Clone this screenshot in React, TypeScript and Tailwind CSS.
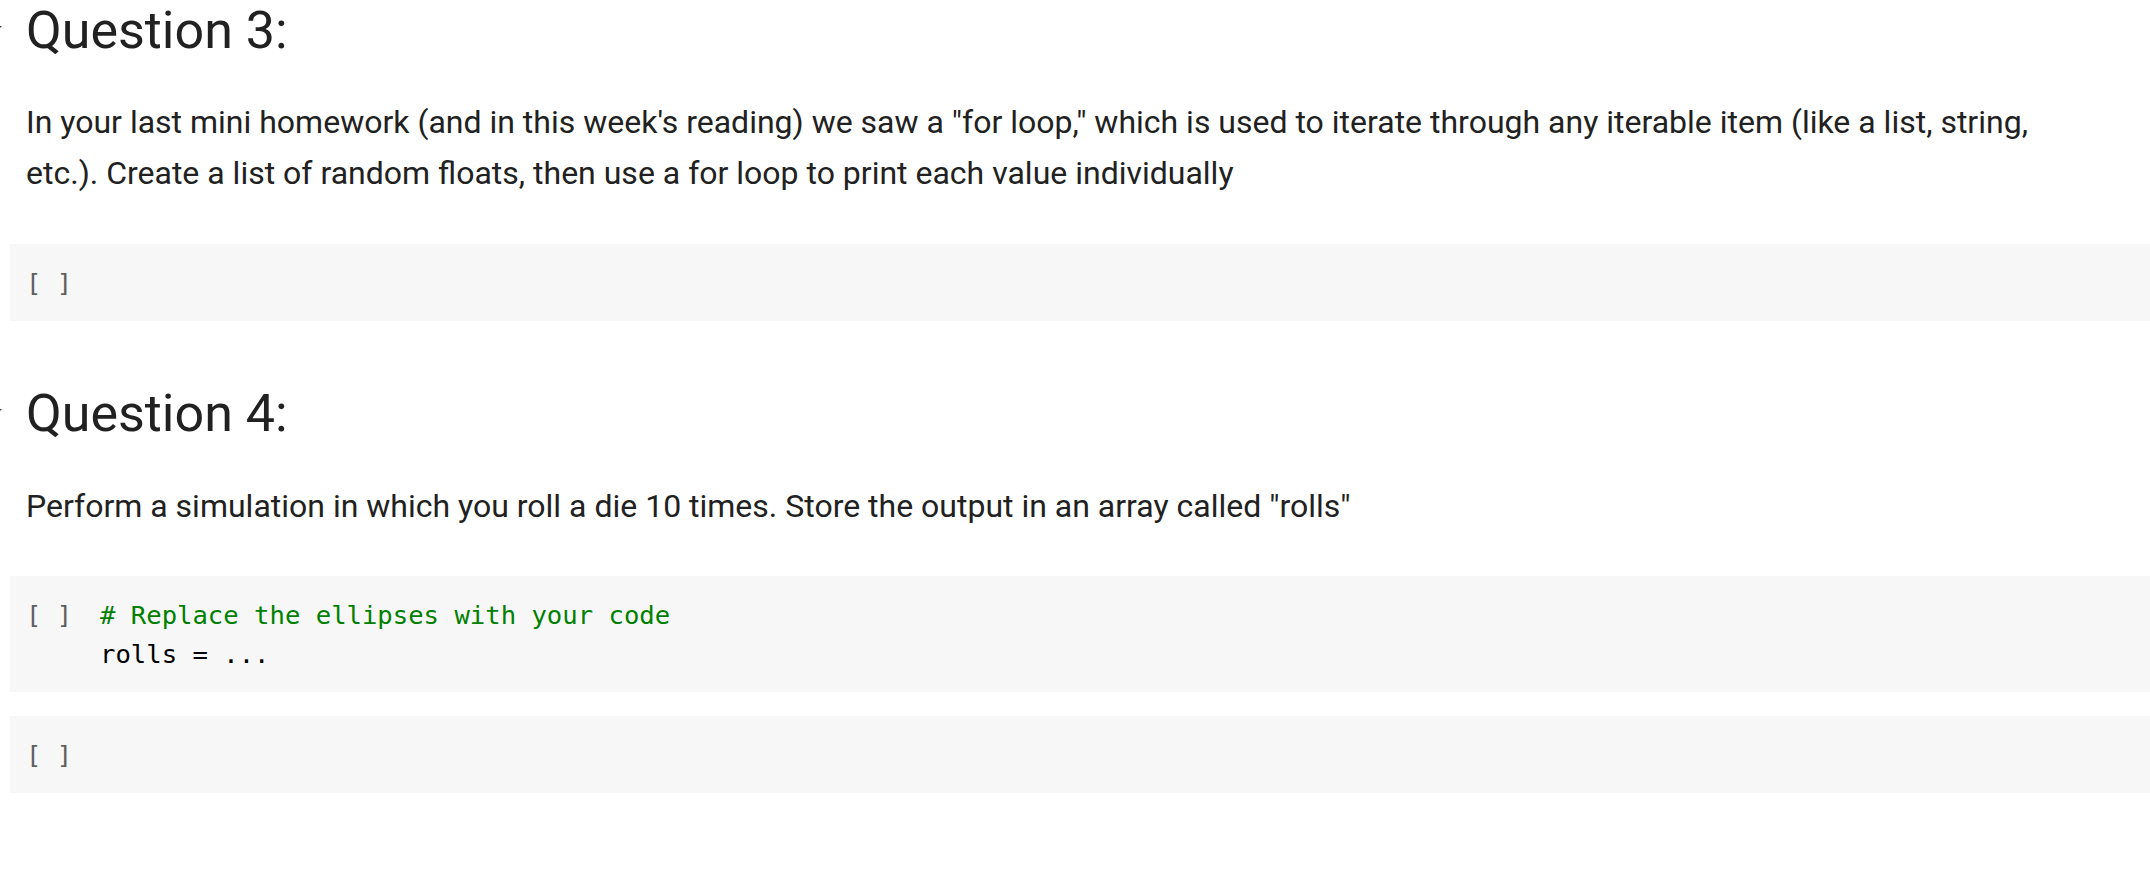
import React from "react";

function Triangle() {
  return (
    <div className="absolute left-[-8px] top-[25px] w-0 h-0 border-l-[5px] border-r-[5px] border-t-[5px] border-l-transparent border-r-transparent border-t-[#444]" />
  );
}

function Heading({ children }: { children: React.ReactNode }) {
  return (
    <div className="relative">
      <Triangle />
      <h2 className="pl-[26px] text-[52px] leading-[60px] font-normal text-[#212121]">{children}</h2>
    </div>
  );
}

function Para({ children }: { children: React.ReactNode }) {
  return (
    <p className="pl-[26px] pr-[80px] text-[32px] leading-[51px] text-[#212121]">{children}</p>
  );
}

function Cell({ lines }: { lines?: React.ReactNode[] }) {
  return (
    <div className="ml-[10px] bg-[#f7f7f7] pt-[20px] pb-[18px] flex font-['DejaVu_Sans_Mono',monospace] text-[25.6px] leading-[39px]">
      <div className="w-[90px] shrink-0 pl-[16px] text-[#5f5f5f] whitespace-pre">[ ]</div>
      <div className="whitespace-pre">
        {lines && lines.length ? lines.map((l, i) => <div key={i}>{l}</div>) : <div>&nbsp;</div>}
      </div>
    </div>
  );
}

export default function App() {
  return (
    <div className="w-[2150px] h-[871px] overflow-hidden bg-white font-['Roboto',sans-serif]">
      <div className="pt-[1px]">
        <Heading>Question 3:</Heading>
        <div className="mt-[36px]">
          <Para>
            In your last mini homework (and in this week's reading) we saw a "for loop," which is used to iterate through any iterable item (like a list, string, etc.). Create a list of random floats, then use a for loop to print each value individually
          </Para>
        </div>
        <div className="mt-[45px]">
          <Cell />
        </div>
        <div className="mt-[63px]">
          <Heading>Question 4:</Heading>
        </div>
        <div className="mt-[37px]">
          <Para>
            Perform a simulation in which you roll a die 10 times. Store the output in an array called "rolls"
          </Para>
        </div>
        <div className="mt-[44px]">
          <Cell
            lines={[
              <span className="text-[#008000]"># Replace the ellipses with your code</span>,
              <span className="text-black">rolls = ...</span>,
            ]}
          />
        </div>
        <div className="mt-[24px]">
          <Cell />
        </div>
      </div>
    </div>
  );
}
